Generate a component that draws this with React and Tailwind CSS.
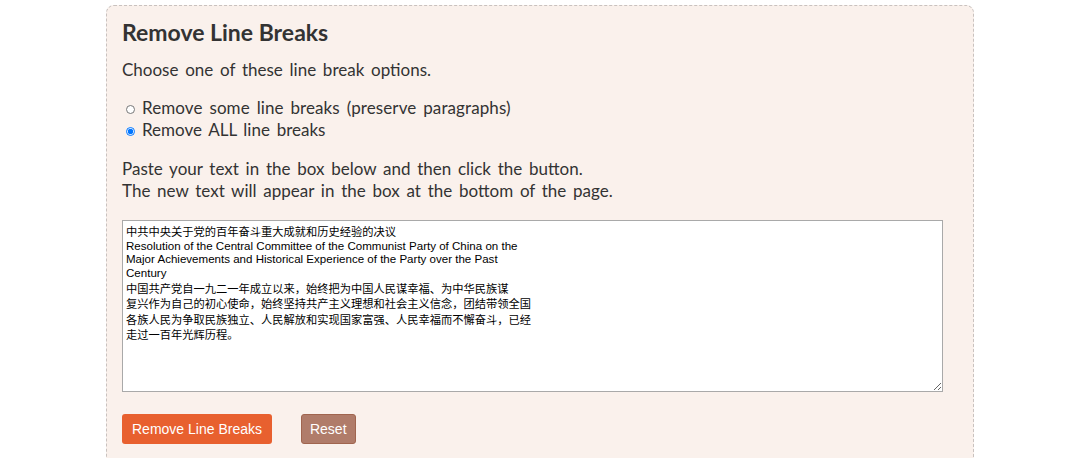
import React from "react";

const lines = [
  ["cjk", "中共中央关于党的百年奋斗重大成就和历史经验的决议"],
  ["lat", "Resolution of the Central Committee of the Communist Party of China on the"],
  ["lat", "Major Achievements and Historical Experience of the Party over the Past"],
  ["lat", "Century"],
  ["cjk", "中国共产党自一九二一年成立以来，始终把为中国人民谋幸福、为中华民族谋"],
  ["cjk", "复兴作为自己的初心使命，始终坚持共产主义理想和社会主义信念，团结带领全国"],
  ["cjk", "各族人民为争取民族独立、人民解放和实现国家富强、人民幸福而不懈奋斗，已经"],
  ["cjk", "走过一百年光辉历程。"],
];

export default function App() {
  return (
    <div className="w-[1080px] h-[458px] overflow-hidden bg-white">
      <div
        className="mx-auto mt-[5px] w-[868px] h-[470px] rounded-[8px] border border-dashed border-[#c9c2bf] bg-[#faf1ec] px-[15px] pt-[12px] text-[#333333]"
        style={{ fontFamily: "Lato, 'Open Sans', sans-serif" }}
      >
        <h1 className="text-[23px] leading-[28px] font-bold">Remove Line Breaks</h1>
        <div className="text-[17px] leading-[22px] [word-spacing:2.4px]">
          <p className="mt-[13px]">Choose one of these line break options.</p>
          <div className="mt-[16px]">
            <label className="flex items-center">
              <input type="radio" name="opt" className="ml-[4px] mr-[7px] mt-[2px] w-[9px] h-[9px]" />
              <span className="[letter-spacing:0.1px]">Remove some line breaks (preserve paragraphs)</span>
            </label>
            <label className="flex items-center">
              <input type="radio" name="opt" defaultChecked className="ml-[4px] mr-[7px] mt-[2px] w-[9px] h-[9px]" />
              <span>Remove ALL line breaks</span>
            </label>
          </div>
          <p className="mt-[17px]">
            Paste your text in the box below and then click the button.
            <br />
            The new text will appear in the box at the bottom of the page.
          </p>
        </div>
        <div
          className="mt-[18px] w-[821px] h-[172px] resize overflow-auto border border-[#a9a9a9] bg-white px-[3px] pt-[3px] text-black whitespace-pre"
        >
          {lines.map(([kind, text], i) =>
            kind === "cjk" ? (
              <div
                key={i}
                className="text-[11.25px] leading-[15.5px]"
                style={{ fontFamily: "'Noto Sans CJK SC', 'Liberation Sans', sans-serif" }}
              >
                {text}
              </div>
            ) : (
              <div
                key={i}
                className="text-[11.55px] leading-[13.7px]"
                style={{ fontFamily: "'Liberation Sans', Arial, sans-serif" }}
              >
                {text}
              </div>
            )
          )}
        </div>
        <div className="mt-[22px] flex gap-[29px]" style={{ fontFamily: "'Liberation Sans', Arial, sans-serif" }}>
          <button className="h-[30px] px-[10px] rounded-[3px] bg-[#e8602f] text-white text-[14px]">
            Remove Line Breaks
          </button>
          <button className="h-[30px] px-[8px] rounded-[3px] bg-[#b07c6a] border border-[#a0654f] text-white text-[14px]">
            Reset
          </button>
        </div>
      </div>
    </div>
  );
}
